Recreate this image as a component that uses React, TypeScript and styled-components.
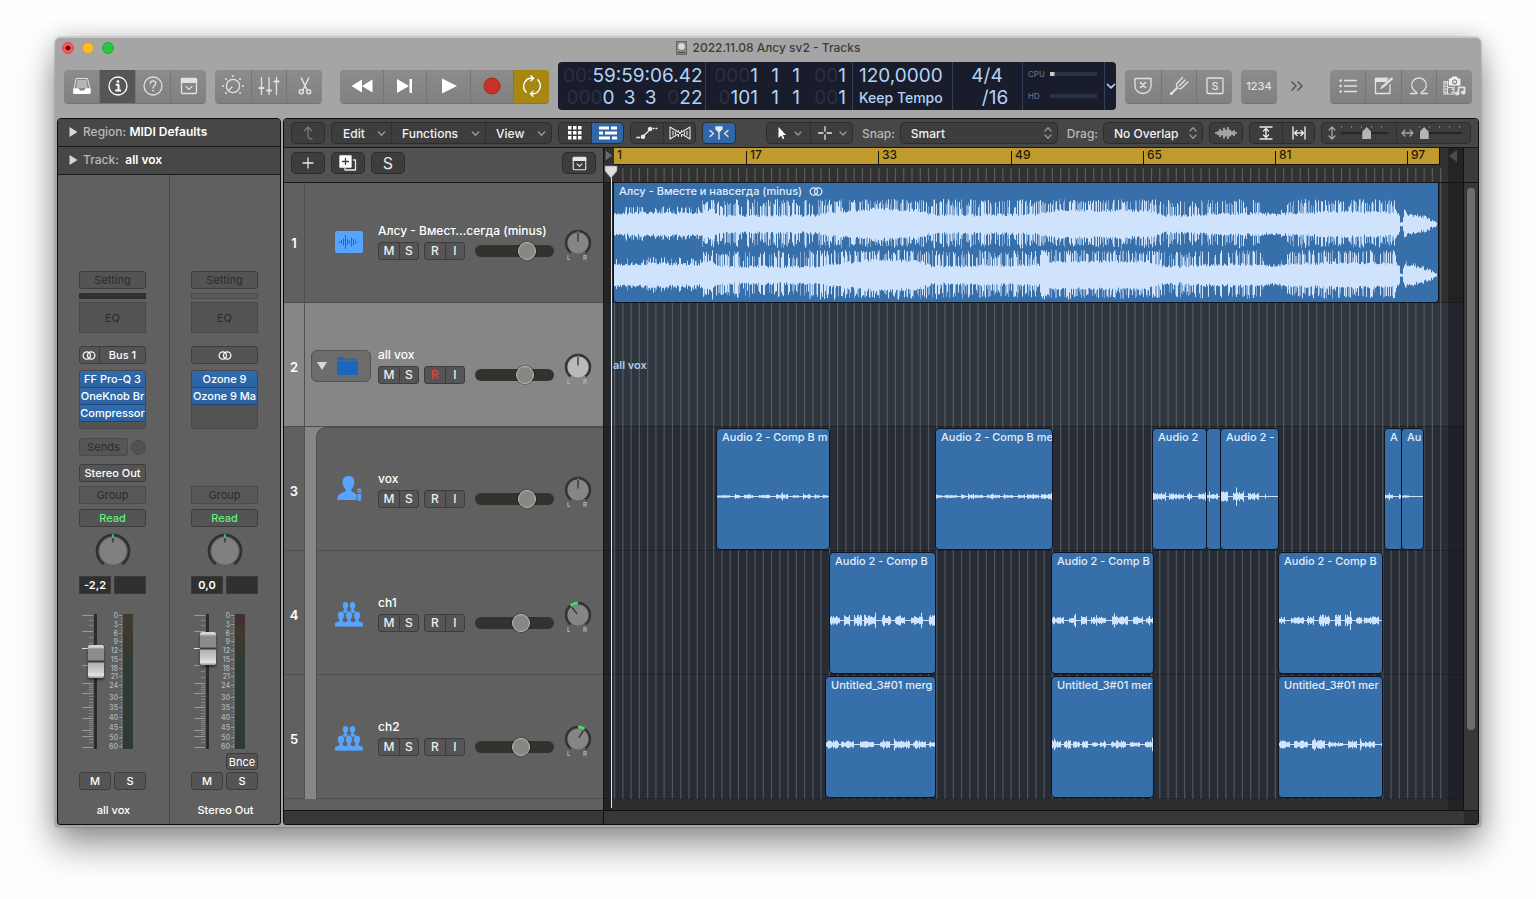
import React from 'react';
import styled, { createGlobalStyle, css } from 'styled-components';

const Global = createGlobalStyle`
  *, *::before, *::after { box-sizing: border-box; }
  body { margin: 0; background: #fefefe; font-family: Inter, "Liberation Sans", sans-serif; }
  button, input, select { font: inherit; color: inherit; margin: 0; padding: 0; border: 0; background: none; border-radius: 0; }
  svg { display: block; flex: none; }
`;

const BLUE = '#376fab';
const WAVE = '#cfe4fc';
const WAVE_MID = '#86abd6';

/* ---------- window ---------- */

const Page = styled.main`
  padding: 37px 55px 73px;
`;

const Window = styled.div`
  background: #a5a5a5;
  border-radius: 6px 6px 3px 3px;
  border-top: 1px solid #c8c8c8;
  box-shadow: 0 0 2px rgba(0, 0, 0, 0.35), 0 18px 36px rgba(0, 0, 0, 0.42), 0 0 22px rgba(0, 0, 0, 0.14);
  padding: 0 2px 2px;
`;

const TitleBar = styled.header`
  height: 22px;
  display: grid;
  grid-template-columns: 1fr auto 1fr;
  align-items: center;
  padding: 0 5px 2px;
`;

const Lights = styled.div`
  display: flex;
  gap: 8px;
`;

const Light = styled.button<{ $color: string; $edge: string; $dirty?: boolean }>`
  width: 12px;
  height: 12px;
  border-radius: 50%;
  background: ${(p) => (p.$dirty ? `radial-gradient(circle, #5a0d08 0 2px, ${p.$color} 3px)` : p.$color)};
  border: 1px solid ${(p) => p.$edge};
`;

const Title = styled.h1`
  margin: 0;
  display: flex;
  align-items: center;
  gap: 6px;
  font-size: 12px;
  font-weight: 500;
  line-height: 16px;
  color: #3c3c3c;
`;

const ControlBar = styled.div`
  height: 52px;
  margin-bottom: 6px;
  padding: 0 7px;
  display: flex;
  align-items: center;
  gap: 9px;
`;

const Group = styled.div<{ $wide?: boolean; $push?: boolean }>`
  display: flex;
  flex: none;
  height: 33px;
  border-radius: 4px;
  overflow: hidden;
  background: linear-gradient(#8c8c8c, #808080);
  box-shadow: 0 1px 0 #747474;
  margin-left: ${(p) => (p.$push ? 'auto' : p.$wide ? '9px' : '0')};
`;

const Seg = styled.button<{ $w?: number; $tone?: 'dark' | 'gold' }>`
  width: ${(p) => p.$w ?? 36}px;
  display: flex;
  align-items: center;
  justify-content: center;
  color: #e2e2e2;
  font-size: 11px;
  font-weight: 500;
  & + & { border-left: 1px solid #757575; }
  ${(p) => p.$tone === 'dark' && css`background: #565656; color: #fff;`}
  ${(p) => p.$tone === 'gold' && css`background: #a68711; color: #fff;`}
`;

const More = styled.button`
  margin-left: 4px;
  color: #555;
`;

/* ---------- LCD ---------- */

const Lcd = styled.section`
  flex: none;
  width: 558px;
  height: 48px;
  border-radius: 4px;
  background: #191c2b;
  color: #b3d3f7;
  display: grid;
  grid-template-columns: 147px 147px 100px 70px 82px 12px;
  overflow: hidden;
`;

const LcdCell = styled.div<{ $center?: boolean }>`
  display: grid;
  grid-template-rows: 22px 22px;
  align-content: center;
  align-items: center;
  justify-items: ${(p) => (p.$center ? 'center' : 'stretch')};
  font-size: 19px;
  line-height: 22px;
  padding: 1px 6px 0 5px;
  & + & { border-left: 1px solid #33415a; }
`;

const Digits = styled.div`
  display: grid;
  grid-template-columns: 1fr 21px 21px 46px;
  text-align: right;
  white-space: nowrap;
`;

const Clock = styled.div`
  text-align: right;
  white-space: nowrap;
`;

const Ghost = styled.span`
  color: #2b3040;
`;

const Tempo = styled.div`
  padding-left: 1px;
  white-space: nowrap;
`;

const TempoMode = styled.div`
  padding-left: 1px;
  font-size: 14px;
  font-weight: 500;
  white-space: nowrap;
`;

const Division = styled.div`
  padding-left: 16px;
`;

const Load = styled.div`
  display: grid;
  grid-template-columns: 22px 1fr;
  align-items: center;
  padding-bottom: 3px;
  font-size: 8px;
  line-height: 16px;
  font-weight: 500;
  color: #5f7189;
`;

const LoadBar = styled.span<{ $lit?: boolean }>`
  height: 4px;
  margin-right: 1px;
  background: ${(p) => (p.$lit ? 'linear-gradient(90deg, #c8c8b8 4px, #273148 5px)' : '#273148')};
`;

const LcdMenu = styled.button`
  display: flex;
  align-items: center;
  justify-content: center;
  border-left: 1px solid #33415a;
`;

/* ---------- panels ---------- */

const Panels = styled.div`
  display: flex;
  align-items: stretch;
  gap: 2px;
`;

const Panel = styled.section<{ $fill?: boolean }>`
  border: 1px solid #0c0c0c;
  border-radius: 4px 4px 3px 3px;
  overflow: hidden;
  background: #606060;
  ${(p) => (p.$fill ? css`flex: 1; min-width: 0;` : css`flex: none; width: 224px; display: flex; flex-direction: column;`)}
`;

const Disclosure = styled.button`
  height: 28px;
  display: flex;
  align-items: center;
  gap: 5px;
  padding: 0 10px 2px;
  background: #474747;
  border-bottom: 1px solid #191919;
  font-size: 12px;
  font-weight: 500;
  color: #b9b9b9;
  & strong { color: #fff; font-weight: 600; }
`;

const Strips = styled.div`
  flex: 1;
  display: grid;
  grid-template-columns: 1fr 1fr;
`;

const Strip = styled.div`
  padding: 96px 23px 5px 21px;
  display: flex;
  flex-direction: column;
  font-size: 11px;
  font-weight: 500;
  color: #fff;
  & + & { border-left: 1px solid #474747; padding-left: 21px; padding-right: 22px; }
`;

const Slot = styled.button<{ $mb: number; $look?: 'dim' | 'flat' | 'read' }>`
  flex: none;
  height: 18px;
  width: 100%;
  display: flex;
  align-items: center;
  justify-content: center;
  margin-bottom: ${(p) => p.$mb}px;
  border: 1px solid #3d3d3d;
  border-radius: 3px;
  background: #545454;
  white-space: nowrap;
  overflow: hidden;
  ${(p) => p.$look === 'dim' && css`color: #2c2c2c; font-weight: 400;`}
  ${(p) => p.$look === 'flat' && css`color: #2c2c2c; font-weight: 400; border-color: #4a4a4a; border-radius: 0; background: #585858;`}
  ${(p) => p.$look === 'read' && css`color: #5cf27c;`}
`;

const GainMeter = styled.div<{ $on?: boolean }>`
  height: 6px;
  margin-bottom: 3px;
  background: ${(p) => (p.$on ? '#323232' : '#585858')};
  border: 1px solid ${(p) => (p.$on ? '#2e2e2e' : '#4c4c4c')};
`;

const Eq = styled.button`
  height: 31px;
  margin-bottom: 13px;
  background: #545454;
  border: 1px solid #484848;
  color: #2c2c2c;
  font-weight: 400;
`;

const BusSplit = styled.span`
  align-self: stretch;
  display: flex;
  align-items: center;
  padding: 0 3px 0 2px;
  border-right: 1px solid #3d3d3d;
`;

const BusName = styled.span`
  flex: 1;
  text-align: center;
`;

const Inserts = styled.div`
  height: 59px;
  margin-bottom: 9px;
  background: #535353;
  border: 1px solid #484848;
  border-radius: 3px;
`;

const Insert = styled.button`
  display: block;
  width: 100%;
  height: 17px;
  background: linear-gradient(#2f6cb0, #2c62a0);
  border-bottom: 1px solid #1d4577;
  border-radius: 3px;
  white-space: nowrap;
  overflow: hidden;
  font-size: 11px;
  line-height: 16px;
`;

const SendRow = styled.div`
  display: grid;
  grid-template-columns: 49px 15px;
  gap: 3px;
  align-items: center;
  height: 18px;
  margin-bottom: 8px;
`;

const SendSlot = styled.button`
  height: 18px;
  border: 1px solid #4a4a4a;
  border-radius: 3px;
  background: #565656;
  color: #2c2c2c;
  font-weight: 400;
`;

const SendKnob = styled.span`
  width: 15px;
  height: 15px;
  border-radius: 50%;
  background: #525252;
  border: 1px solid #484848;
`;

const Blank = styled.div`
  height: 48px;
  flex: none;
`;

const KnobBox = styled.label<{ $mb?: number }>`
  position: relative;
  flex: none;
  align-self: center;
  margin-bottom: ${(p) => p.$mb ?? 0}px;
`;

const KnobInput = styled.input`
  position: absolute;
  inset: 0;
  width: 100%;
  height: 100%;
  opacity: 0;
`;

const Pair = styled.div<{ $mb: number }>`
  display: grid;
  grid-template-columns: 1fr 1fr;
  gap: 3px;
  margin-bottom: ${(p) => p.$mb}px;
`;

const Value = styled.input`
  width: 100%;
  height: 18px;
  background: #303030;
  border: 1px solid #3a3a3a;
  text-align: center;
  font-weight: 600;
`;

const FaderBox = styled.div`
  position: relative;
  height: 135px;
  margin-bottom: 4px;
  & > svg { overflow: visible; }
`;

const Fader = styled.input`
  position: absolute;
  left: 8px;
  top: 0;
  width: 17px;
  height: 135px;
  appearance: none;
  writing-mode: vertical-lr;
  direction: rtl;
  &::-webkit-slider-thumb {
    appearance: none;
    width: 16px;
    height: 33px;
    border-radius: 2px;
    background: linear-gradient(#d5d5d5 0 2px, #8c8c8c 4px 15px, #3c3c3c 16px 17px, #aab0b4 18px, #d0d4d6 28px, #e6e6e6 30px, #9a9a9a 33px);
    box-shadow: 0 2px 3px rgba(0, 0, 0, 0.5);
  }
`;

const BounceRow = styled.div`
  display: flex;
  justify-content: flex-end;
  height: 17px;
  margin-bottom: 2px;
`;

const Bounce = styled.button`
  width: 32px;
  border: 1px solid #3d3d3d;
  border-radius: 3px;
  background: #545454;
  font-weight: 400;
  display: flex;
  align-items: center;
  justify-content: center;
`;

const StripName = styled.div`
  margin: 12px 0 0 2px;
  line-height: 16px;
  text-align: center;
  white-space: nowrap;
`;

/* ---------- tracks toolbar ---------- */

const TrackBar = styled.div`
  height: 29px;
  background: #474747;
  border-bottom: 1px solid #161616;
  padding: 0 8px;
  display: flex;
  align-items: center;
  gap: 8px;
  color: #f2f2f2;
  font-size: 12px;
  font-weight: 500;
`;

const Box = styled.div<{ $push?: boolean }>`
  flex: none;
  display: flex;
  height: 20px;
  border-radius: 4px;
  background: #3d3d3d;
  box-shadow: 0 0 0 1px #2d2d2d;
  overflow: hidden;
  margin-left: ${(p) => (p.$push ? 'auto' : '0')};
`;

const BoxButton = styled.button<{ $w: number; $on?: boolean; $off?: boolean }>`
  width: ${(p) => p.$w}px;
  display: flex;
  align-items: center;
  justify-content: center;
  background: ${(p) => (p.$on ? '#2f67a9' : 'none')};
  color: ${(p) => (p.$off ? '#7c7c7c' : '#e8e8e8')};
  & + & { border-left: 1px solid #303030; }
`;

const MenuButton = styled.button<{ $w: number }>`
  width: ${(p) => p.$w}px;
  display: flex;
  align-items: center;
  justify-content: space-between;
  padding: 0 5px 0 11px;
  & + & { border-left: 1px solid #303030; padding-left: 10px; }
  & svg { color: #9a9a9a; }
`;

const Field = styled.label`
  flex: none;
  display: flex;
  align-items: center;
  gap: 6px;
  color: #b9b9b9;
  margin-left: 2px;
`;

const SelectBox = styled.span<{ $w: number }>`
  position: relative;
  width: ${(p) => p.$w}px;
  height: 20px;
  border-radius: 4px;
  background: #3d3d3d;
  box-shadow: 0 0 0 1px #2d2d2d;
  & svg { position: absolute; right: 4px; top: 3px; pointer-events: none; }
`;

const Select = styled.select`
  appearance: none;
  width: 100%;
  height: 20px;
  padding-left: 10px;
  color: #f2f2f2;
`;

const ZoomPart = styled.label<{ $w: number }>`
  width: ${(p) => p.$w}px;
  display: flex;
  align-items: center;
  gap: 5px;
  padding: 0 8px 0 6px;
  color: #a5a5a5;
  & + & { border-left: 1px solid #303030; padding-left: 4px; }
`;

const ZoomRange = styled.input`
  flex: 1;
  min-width: 0;
  height: 20px;
  appearance: none;
  background:
    linear-gradient(#262626, #262626) center / 100% 2px no-repeat,
    repeating-linear-gradient(90deg, #777 0 1px, transparent 1px 10px) 0 3px / 100% 2px no-repeat;
  &::-webkit-slider-thumb {
    appearance: none;
    width: 9px;
    height: 12px;
    background: #b5b5b5;
    clip-path: polygon(50% 0, 100% 40%, 100% 100%, 0 100%, 0 40%);
  }
`;

/* ---------- arrange area ---------- */

const Arrange = styled.div`
  display: grid;
  grid-template-columns: 320px minmax(0, 1fr) 15px;
`;

const HeaderTop = styled.div`
  height: 35px;
  display: flex;
  align-items: center;
  gap: 8px;
  padding: 0 8px 4px;
  background: #525252;
  border-bottom: 1px solid #1a1a1a;
  border-right: 1px solid #111;
  font-size: 16px;
  color: #f2f2f2;
`;

const Headers = styled.div`
  height: 627px;
  background: #606060;
  border-right: 1px solid #161616;
`;

const Row = styled.div<{ $clipped?: boolean; $selected?: boolean }>`
  height: ${(p) => (p.$clipped ? 120 : 124)}px;
  overflow: hidden;
  display: flex;
  align-items: flex-end;
  color: #fff;
  background: ${(p) => (p.$selected ? '#868686' : '#606060')};
`;

const RowNumber = styled.div`
  width: 21px;
  height: 124px;
  padding-top: 4px;
  display: flex;
  align-items: center;
  justify-content: center;
  font-size: 13px;
  font-weight: 600;
  border-right: 1px solid #505050;
  border-bottom: 1px solid #4e4e4e;
`;

const Nest = styled.div`
  width: 11px;
  height: 124px;
  background: #868686;
`;

const RowBody = styled.div<{ $nested?: boolean; $first?: boolean; $selected?: boolean }>`
  flex: 1;
  height: 124px;
  padding-top: 2px;
  display: flex;
  align-items: center;
  background: ${(p) => (p.$selected ? '#868686' : '#606060')};
  border-bottom: 1px solid #4e4e4e;
  ${(p) => p.$nested && css`border-left: 1px solid #505050;`}
  ${(p) => p.$first && css`padding-top: 0; border-top: 1px solid #505050; border-top-left-radius: 10px;`}
`;

const NestShell = styled.div`
  flex: 1;
  display: flex;
  background: #868686;
`;

const IconCell = styled.div<{ $nested?: boolean }>`
  width: ${(p) => (p.$nested ? 54 : 66)}px;
  display: flex;
  justify-content: flex-end;
`;

const IconSlot = styled.div`
  width: 44px;
  display: flex;
  justify-content: center;
`;

const FolderButton = styled.button`
  width: 60px;
  height: 32px;
  border: 1px solid #555;
  border-radius: 6px;
  background: #6c6c6c;
  display: flex;
  align-items: center;
  gap: 10px;
  padding-left: 5px;
`;

const Info = styled.div`
  width: 176px;
  margin: 0 10px 0 7px;
`;

const TrackName = styled.div`
  height: 19px;
  font-size: 12px;
  line-height: 16px;
  font-weight: 500;
  white-space: nowrap;
`;

const Controls = styled.div`
  display: flex;
  align-items: center;
`;

const Duo = styled.div`
  display: flex;
  height: 18px;
  border: 1px solid #3c3c3c;
  border-radius: 3px;
  margin-right: 5px;
  background: #555;
`;

const DuoButton = styled.button<{ $red?: boolean }>`
  width: 20px;
  font-size: 12px;
  font-weight: 500;
  line-height: 16px;
  color: ${(p) => (p.$red ? '#e2433c' : '#eee')};
  & + & { width: 19px; border-left: 1px solid #3c3c3c; }
`;

const Volume = styled.input`
  appearance: none;
  width: 79px;
  height: 12px;
  margin-left: 5px;
  border-radius: 6px;
  background: #32332f;
  &::-webkit-slider-thumb {
    appearance: none;
    width: 18px;
    height: 18px;
    border-radius: 50%;
    background: #868884;
    border: 1px solid #bdbdbd;
    box-shadow: 0 0 0 1px rgba(0, 0, 0, 0.25);
  }
`;

const Timeline = styled.div`
  position: relative;
  overflow: hidden;
  background: #2e2e2e;
`;

const Ruler = styled.div`
  height: 35px;
  position: relative;
  background: #323232;
  border-bottom: 1px solid #141414;
`;

const Cycle = styled.div`
  height: 17px;
  width: 826px;
  margin-left: 10px;
  background: #c09a2d;
  border-bottom: 1px solid #111;
  border-right: 1px solid #111;
`;

const Overlay = styled.svg`
  position: absolute;
  left: 0;
  top: 0;
`;

const BarLabel = styled.span<{ $x: number }>`
  position: absolute;
  left: ${(p) => p.$x}px;
  top: 0;
  font-size: 12px;
  line-height: 14px;
  font-weight: 500;
  color: #1d1a0c;
`;

const Lane = styled.div<{ $clipped?: boolean; $bg: string }>`
  height: ${(p) => (p.$clipped ? 120 : 124)}px;
  background: ${(p) => p.$bg};
  border-bottom: 1px solid #1d2126;
`;

const LaneStack = styled.div`
  position: relative;
`;

const ClipLayer = styled.div`
  position: absolute;
  left: 0;
  right: 0;
  top: 35px;
`;

const ClipRow = styled.div<{ $clipped?: boolean }>`
  position: relative;
  height: ${(p) => (p.$clipped ? 120 : 124)}px;
`;

const Region = styled.div<{ $x: number; $w: number; $tall?: boolean }>`
  position: absolute;
  left: ${(p) => p.$x}px;
  width: ${(p) => p.$w}px;
  top: ${(p) => (p.$tall ? 0 : 1)}px;
  height: ${(p) => (p.$tall ? 120 : 122)}px;
  background: ${BLUE};
  border: 1px solid #0d1420;
  border-radius: ${(p) => (p.$tall ? '0 0 4px 4px' : '4px')};
  border-top-width: ${(p) => (p.$tall ? 0 : 1)}px;
  overflow: hidden;
`;

const RegionName = styled.div`
  position: relative;
  display: flex;
  align-items: center;
  gap: 7px;
  padding-left: 5px;
  font-size: 11px;
  line-height: 16px;
  font-weight: 500;
  color: #e0edfc;
  white-space: nowrap;
`;

const FolderLabel = styled.span`
  position: absolute;
  left: 9px;
  top: 54px;
  font-size: 11px;
  line-height: 16px;
  font-weight: 600;
  color: #a9cdf5;
`;

const EndShade = styled.div`
  position: absolute;
  left: 844px;
  right: 0;
  top: 0;
  bottom: 0;
  background: rgba(20, 20, 20, 0.45);
`;

const StartShade = styled.div`
  position: absolute;
  left: 0;
  width: 7px;
  top: 35px;
  bottom: 0;
  background: rgba(20, 20, 20, 0.4);
`;

const ScrollTop = styled.div`
  height: 35px;
  background: #3a3a3a;
  border-left: 1px solid #111;
  border-bottom: 1px solid #111;
`;

const ScrollTrack = styled.div`
  height: 627px;
  padding: 5px 3px;
  background: #383838;
  border-left: 1px solid #111;
`;

const ScrollThumb = styled.div`
  height: 542px;
  border-radius: 4px;
  background: #6e6e6e;
`;

const FootBar = styled.div`
  height: 14px;
  background: #373737;
  border-top: 1px solid #111;
  display: grid;
  grid-template-columns: 320px 1fr 14px;
  & > span:first-child { border-right: 1px solid #111; }
  & > span:last-child { background: #2c2c2c; }
`;

/* ---------- icons ---------- */

type IconProps = { w?: number; h?: number; box?: string; sw?: number; children: React.ReactNode };
const Icon = ({ w = 20, h = 20, box, sw = 1.3, children }: IconProps) => (
  <svg width={w} height={h} viewBox={box ?? `0 0 ${w} ${h}`} fill="none" stroke="currentColor" strokeWidth={sw} strokeLinecap="round" strokeLinejoin="round" aria-hidden="true">
    {children}
  </svg>
);

const TrayIcon = () => (
  <Icon sw={1}>
    <path d="M4.5 2.5h11l2.6 11v3.6h-16v-3.6z" />
    <path d="M6 5h8M5.6 7h8.8M5.2 9h9.6M5 11h10" strokeWidth="1.2" />
    <path d="M2.1 12.8h4.4c.5 0 .6 2.2 1.4 2.2h4.2c.8 0 .9-2.2 1.4-2.2h4.6v4.7H2.1z" fill="#fff" stroke="#fff" />
  </Icon>
);
const InfoIcon = () => (
  <Icon>
    <circle cx="10" cy="10" r="9" />
    <circle cx="10" cy="5.6" r="1.4" fill="currentColor" stroke="none" />
    <path d="M7.8 8.8h2.7v5.4M7.2 14.4h5.8" strokeWidth="2" strokeLinecap="butt" />
  </Icon>
);
const HelpIcon = () => (
  <Icon>
    <circle cx="10" cy="10" r="9" />
    <path d="M7.3 7.6c0-3.6 5.5-3.4 5.5-.2 0 2-2.7 2.3-2.7 4.6" />
    <circle cx="10" cy="14.6" r=".9" fill="currentColor" stroke="none" />
  </Icon>
);
const DropWindowIcon = ({ s = 18 }: { s?: number }) => (
  <Icon w={s} h={s} box="0 0 18 18">
    <rect x="1.5" y="1.5" width="15" height="15" rx="1" />
    <path d="M1.5 2h15v3.4h-15z" fill="currentColor" />
    <path d="M6 9.4l3 3 3-3" />
  </Icon>
);
const DialIcon = () => (
  <Icon w={22} h={22}>
    <circle cx="11" cy="11" r="6.6" />
    <path d="M10 12l-3.4 3.4" />
    {[0, 45, 135, 180, 225, 270, 315].map((a) => (
      <circle key={a} cx={11 + 10 * Math.cos((a * Math.PI) / 180)} cy={11 + 10 * Math.sin((a * Math.PI) / 180)} r="1" fill="currentColor" stroke="none" />
    ))}
  </Icon>
);
const MixerIcon = () => (
  <Icon w={22}>
    <path d="M3.5 1.5v17M11 1.5v17M18.5 1.5v17" />
    <path d="M1.5 12h4M9 14.5h4M16.5 5.5h4" strokeWidth="2.2" />
  </Icon>
);
const ScissorsIcon = () => (
  <Icon w={16} sw={1.5}>
    <path d="M4.3 2l5.8 12M11.7 2L5.9 14" />
    <circle cx="4.3" cy="15.7" r="2" />
    <circle cx="11.7" cy="15.7" r="2" />
  </Icon>
);
const RewindIcon = () => (
  <Icon w={22} h={16} sw={0}><path d="M11 1.500v13L0.500 8zM21.500 1.500v13L11 8z" fill="#fff" /></Icon>
);
const ForwardIcon = () => (
  <Icon w={18} h={16} sw={0}><path d="M1 1l12 7-12 7zM13.500 1H16v14h-2.500z" fill="#fff" /></Icon>
);
const PlayIcon = () => (
  <Icon w={18} h={18} sw={0}><path d="M2 1.500L17 9 2 16.500z" fill="#fff" /></Icon>
);
const RecordIcon = () => (
  <Icon w={18} h={18} sw={1}><circle cx="9" cy="9" r="8" fill="#cb3028" stroke="#a52a24" /></Icon>
);
const CycleIcon = () => (
  <Icon w={22} h={22} sw={1.4}>
    <path d="M5.200 17.200A8.300 8.300 0 0 1 9 3.200l3.200 0M16.800 4.800A8.300 8.300 0 0 1 13 18.800l-3.200 0" />
    <path d="M10 .8l2.600 2.400L10 5.700M12 16.300l-2.600 2.500 2.600 2.400" />
  </Icon>
);
const ShieldIcon = () => (
  <Icon w={18} h={18}>
    <path d="M1 1.500h16v7.200c0 4.600-3.700 7.800-8 7.800s-8-3.200-8-7.800z" />
    <path d="M6.500 5.500l5 5M11.500 5.500l-5 5" strokeWidth="1.600" />
  </Icon>
);
const ForkIcon = () => (
  <Icon>
    <path d="M2.500 17.500l5-5" strokeWidth="2" />
    <circle cx="2.400" cy="17.500" r="1.500" fill="currentColor" stroke="none" />
    <path d="M13.500 1.500L8 7.500c-2 2.500 2 7 4.700 4.500l6-6M16 4l-5.500 5.800" />
  </Icon>
);
const SoloIcon = () => (
  <Icon w={18} h={18}>
    <rect x="1" y="1" width="16" height="15.500" rx="1" />
    <text x="9" y="13" textAnchor="middle" fontSize="11" fontWeight="500" fill="currentColor" stroke="none">S</text>
  </Icon>
);
const ListIcon = () => (
  <Icon w={18} h={16}>
    <path d="M5.500 2.500h12M5.500 8h12M5.500 13.500h12" />
    <path d="M1.500 2.500h.2M1.500 8h.2M1.500 13.500h.2" strokeWidth="2.400" />
  </Icon>
);
const NoteIcon = () => (
  <Icon>
    <path d="M16 9v8.500H1.500v-15H14" />
    <path d="M1.500 2.500h11v2.800h-11z" fill="currentColor" />
    <path d="M9 10.600l8.700-8" strokeWidth="2.300" />
    <path d="M7 12.500l1.200-2.200" />
  </Icon>
);
const LoopIcon = () => (
  <Icon>
    <path d="M1.500 17.500h6.200c.6-.5-.2-1.300-.8-1.700a7.300 7.300 0 1 1 6.200 0c-.6.400-1.400 1.200-.8 1.700h6.200" />
  </Icon>
);
const MediaIcon = () => (
  <Icon w={24} h={20} sw={1.2}>
    <path d="M1 5.500h3.500v12.500H1zM4.500 11.500h5M4.500 18h6.500V10" />
    <path d="M2.800 6.500v11M9.300 12.500v5" strokeWidth="1.600" strokeDasharray="1.500 1.500" strokeLinecap="butt" />
    <path d="M6.500 3h2l1-1.800h4l1 1.800h2.300v6H6.500z" fill="#f2f2f2" stroke="#f2f2f2" />
    <circle cx="11.600" cy="5.800" r="2" stroke="#858585" />
    <path d="M15.500 17.300v-6h6v5" strokeWidth="1.800" />
    <ellipse cx="14.200" cy="17.500" rx="1.700" ry="1.300" fill="currentColor" />
    <ellipse cx="20.200" cy="16.500" rx="1.700" ry="1.300" fill="currentColor" />
  </Icon>
);
const Chevron = ({ s = 9 }: { s?: number }) => (
  <Icon w={s} h={s} box="0 0 9 9" sw={1.4}><path d="M1.300 3l3.200 3.200L7.700 3" /></Icon>
);
const UpDown = () => (
  <Icon w={10} h={14} sw={1.2}><path d="M2 5l3-3.300L8 5M2 9l3 3.300L8 9" stroke="#9c9c9c" /></Icon>
);
const Stereo = () => (
  <Icon w={14} h={9} sw={1.2}><circle cx="4.800" cy="4.500" r="3.700" /><circle cx="9.200" cy="4.500" r="3.700" /></Icon>
);
const Tri = ({ down }: { down?: boolean }) => (
  <Icon w={10} h={12} sw={0}><path d={down ? 'M0 2h10L5 10z' : 'M1.500 1l8 5-8 5z'} fill="#d8d8d8" /></Icon>
);
const WaveGlyph = () => (
  <Icon w={22} h={16} sw={1.2}>
    <path d="M1 7.500v1M3 6.500v3M5 4.500v7M7 6v4M9 3v10M11 5v6M13 2.500v11M15 5v6M17 6.500v3M19 5.500v5M21 7.500v1" />
  </Icon>
);
const PersonIcon = () => (
  <svg width="28" height="28" viewBox="0 0 28 28" fill="#57a4ff" aria-hidden="true">
    <path d="M13.500 1c4 0 6 2.600 5.800 6.500-.1 3-1.400 5.500-2.800 6.800v2.200c2.500 1 5.500 2 5.800 5.500v3H2.200c0-5.500 4-7.500 8.300-8.500v-2.200C9 13 7.700 10.500 7.600 7.500 7.400 3.600 9.500 1 13.500 1z" />
    <g stroke="#606060" strokeWidth=".8"><rect x="21.500" y="13" width="5.500" height="5" rx="2.500" /><path d="M21.800 18.300h5l-.5 8h-4z" /></g>
    <path d="M22.500 15.500h3.500" stroke="#606060" strokeWidth=".8" />
  </svg>
);
const GroupPeopleIcon = () => (
  <svg width="30" height="26" viewBox="0 0 30 26" fill="#57a4ff" aria-hidden="true">
    {[11.5, 18.5].map((x) => (
      <g key={x}><ellipse cx={x} cy="4.500" rx="2.700" ry="3.400" /><path d={`M${x - 1.2} 6h2.400v3l3.300 1.400v1.600h-9v-1.600l3.300-1.400z`} /></g>
    ))}
    {[7, 15, 23].map((x) => (
      <ellipse key={x} cx={x} cy="14.500" rx="3.500" ry="4.200" stroke="#606060" strokeWidth=".8" />
    ))}
    {[7, 15, 23].map((x) => (
      <path key={x} d={`M${x - 1.6} 17h3.200v3.200l4.400 1.900v3.400h-12v-3.400l4.400-1.900z`} />
    ))}
  </svg>
);
const FolderIcon = () => (
  <svg width="22" height="20" viewBox="0 0 22 20" fill="#1b65bd" aria-hidden="true">
    <path d="M0 4V2c0-.6.400-1 1-1h6l1.500 1.800H20c.6 0 1 .4 1 1V4.500H0z" opacity=".85" />
    <path d="M0 5.300h21V18c0 .6-.4 1-1 1H1c-.6 0-1-.4-1-1z" />
  </svg>
);
const AudioTrackIcon = () => (
  <svg width="28" height="22" viewBox="0 0 28 22" aria-hidden="true">
    <rect width="28" height="22" rx="2.500" fill="#57a4ff" />
    <path d="M4.500 10v2M6.500 9v4M8.500 7.500v7M10.500 4v14M12.500 8v6M14.500 9.500v3M16.500 6.500v9M18.500 8v6M20.500 9.500v3M22.500 10.500v1" stroke="#2f66a8" />
  </svg>
);

/* ---------- knobs ---------- */

const polar = (cx: number, cy: number, r: number, deg: number) => {
  const a = ((deg - 90) * Math.PI) / 180;
  return `${(cx + r * Math.cos(a)).toFixed(2)} ${(cy + r * Math.sin(a)).toFixed(2)}`;
};

const arc = (cx: number, cy: number, r: number, from: number, to: number) =>
  `M${polar(cx, cy, r, from)}A${r} ${r} 0 ${to - from > 180 ? 1 : 0} 1 ${polar(cx, cy, r, to)}`;

const Pan = ({ name, angle = 0, bright }: { name: string; angle?: number; bright?: boolean }) => (
  <KnobBox>
    <svg width="28" height="38" viewBox="0 0 28 38" aria-hidden="true">
      <circle cx="14" cy="20" r="10.500" fill={bright ? '#b9b9b9' : '#858585'} />
      <path d={arc(14, 20, 12, -142, 142)} fill="none" stroke="#333" strokeWidth="2.400" />
      {angle !== 0 && <path d={arc(14, 20, 12, Math.min(0, angle), Math.max(0, angle))} fill="none" stroke="#4fd963" strokeWidth="2.800" />}
      <path d={`M${polar(14, 20, 1.5, angle)}L${polar(14, 20, 10, angle)}`} stroke="#2b2b2b" strokeWidth="1.200" />
      {angle === 0 && <path d="M14 8v2" stroke="#3f9f4c" strokeWidth="1.200" />}
      <g fill="#b8b8b8" fontSize="6" fontWeight="600"><text x="3" y="37">L</text><text x="19" y="37">R</text></g>
    </svg>
    <KnobInput type="range" min={-64} max={63} defaultValue={angle} aria-label={`${name} pan`} />
  </KnobBox>
);

const StripKnob = ({ name }: { name: string }) => (
  <KnobBox $mb={7}>
    <svg width="36" height="36" viewBox="0 0 36 36" aria-hidden="true">
      <circle cx="18" cy="18" r="13.500" fill="#808080" />
      <path d={arc(18, 18, 16, -145, 145)} fill="none" stroke="#303030" strokeWidth="2.600" />
      <path d="M18 5v4.500" stroke="#222" strokeWidth="1.200" />
      <path d="M18 1v4" stroke="#4fd963" strokeWidth="1.400" />
    </svg>
    <KnobInput type="range" min={-64} max={63} defaultValue={0} aria-label={`${name} pan`} />
  </KnobBox>
);

/* ---------- fader scale ---------- */

const METER: [string, number][] = [
  ['0', 2], ['3', 11], ['6', 20], ['9', 28], ['12', 37], ['15', 46], ['18', 55], ['21', 63],
  ['24', 72], ['30', 84], ['35', 94], ['40', 104], ['45', 114], ['50', 124], ['60', 133],
];
const MAJOR = [2, 18, 35, 52, 70, 80, 94, 105, 117, 123, 134];
const MINOR = [7, 12, 24, 30, 41, 47, 58, 64, 72, 74, 76, 78, 83, 86, 89, 92, 97, 100, 103, 107, 109, 111, 113, 115, 119, 121, 126, 129];

const FaderScale = ({ hot }: { hot?: boolean }) => (
  <svg width="67" height="136" viewBox="0 0 67 136" aria-hidden="true">
    <defs>
      <linearGradient id={hot ? 'meterHot' : 'meter'} x1="0" y1="0" x2="0" y2="1">
        <stop offset="0" stopColor={hot ? '#432f2f' : '#413a2e'} />
        <stop offset=".08" stopColor={hot ? '#432f2f' : '#413a2e'} />
        <stop offset=".09" stopColor="#403a2e" />
        <stop offset=".3" stopColor="#35392e" />
        <stop offset=".35" stopColor="#2f3a32" />
        <stop offset="1" stopColor="#2f3a32" />
      </linearGradient>
    </defs>
    <path d={MAJOR.map((y) => `M3 ${y - 0.5}h11`).join('')} stroke="#9a9a9a" />
    <path d={MINOR.map((y) => `M10 ${y - 0.5}h4`).join('')} stroke="#878787" />
    <path d="M3 34.500h11" stroke="#e0e0e0" />
    <rect x="15" y="0" width="3" height="135" rx="1" fill="#2c2c2c" />
    <path d="M42.500 1v134" stroke="#9a9a9a" strokeDasharray="1 2" />
    {METER.map(([t, y]) => (
      <g key={t}>
        <text x="39" y={y + 2} textAnchor="end" fontSize="7" fill="#b5b5b5">{t}</text>
        <path d={`M40 ${y - 0.5}h3`} stroke="#9a9a9a" />
      </g>
    ))}
    <rect x="44" y="0" width="10" height="135" fill={`url(#${hot ? 'meterHot' : 'meter'})`} />
  </svg>
);

/* ---------- waveforms ---------- */

const rng = (seed: number) => () => {
  seed = (seed + 0x6d2b79f5) | 0;
  let t = Math.imul(seed ^ (seed >>> 15), 1 | seed);
  t = (t + Math.imul(t ^ (t >>> 7), 61 | t)) ^ t;
  return ((t ^ (t >>> 14)) >>> 0) / 4294967296;
};

/* x, body height, peak height, share of columns that peak */
const SONG: [number, number, number, number][] = [
  [0, 9, 17, 0.25], [40, 10, 18, 0.25], [86, 9, 17, 0.25], [88, 11, 25, 0.6], [98, 14, 25, 0.6],
  [103, 7, 25, 0.6], [200, 7, 25, 0.6], [222, 10, 25, 0.6], [262, 14, 25, 0.6], [305, 12, 25, 0.6],
  [318, 7, 25, 0.6], [420, 8, 25, 0.6], [440, 12, 25, 0.6], [535, 12, 25, 0.6], [548, 7, 25, 0.5],
  [570, 7, 23, 0.5], [600, 9, 25, 0.5], [647, 9, 25, 0.4], [650, 8, 12, 0.3], [665, 8, 11, 0.3],
  [672, 9, 25, 0.6], [720, 11, 25, 0.6], [780, 10, 25, 0.7], [782, 10, 15, 0.3], [785, 7, 9, 0.3], [786, 1, 1, 0],
  [788, 1, 1, 0], [790, 9, 15, 0.3], [800, 7, 12, 0.3], [812, 4, 8, 0.3], [822, 1, 1, 0], [826, 0, 0, 0],
];

const songPaths = (cy: number, seed: number) => {
  const r = rng(seed);
  let bright = '';
  let mid = '';
  for (let x = 0; x < 823; x++) {
    const k = SONG.findIndex((p) => p[0] > x);
    const a = SONG[k - 1];
    const b = SONG[k];
    const t = (x - a[0]) / (b[0] - a[0]);
    const body = a[1] + (b[1] - a[1]) * t;
    const peak = a[2] + (b[2] - a[2]) * t;
    const share = a[3];
    const base = body + r() * Math.min(3, body);
    bright += `M${x + 0.5} ${(cy - base).toFixed(1)}V${(cy + base + r()).toFixed(1)}`;
    if (r() < share) {
      const h = base + (peak - base) * (0.3 + 0.7 * Math.sqrt(r()));
      const line = `M${x + 0.5} ${(cy - h).toFixed(1)}V${(cy + h * (0.85 + r() * 0.15)).toFixed(1)}`;
      if (r() < 0.5) bright += line;
      else mid += line;
    }
  }
  return { bright, mid };
};

const SongWave = () => {
  const up = songPaths(41, 11);
  const low = songPaths(92, 47);
  return (
    <Overlay width="824" height="119" aria-hidden="true">
      <path d={up.mid + low.mid} stroke={WAVE_MID} />
      <path d={up.bright + low.bright} stroke={WAVE} />
    </Overlay>
  );
};

const VoiceWave = ({ w, seed, amp, quietFrom = 1 }: { w: number; seed: number; amp: number; quietFrom?: number }) => {
  const r = rng(seed);
  let d = `M0 67.500H${w}`;
  let left = 0;
  let on = false;
  let level = 0;
  for (let x = 0; x < w * quietFrom; x++) {
    if (left <= 0) {
      on = !on;
      left = on ? 4 + r() * 12 : 1 + r() * 5;
      level = amp * (0.4 + r() * 0.4);
    }
    left--;
    if (!on) continue;
    const spike = r() < 0.06 ? 1.8 : 1;
    const h = Math.max(1, level * (0.5 + r() * 0.7) * spike);
    d += `M${x + 0.5} ${(67.5 - h).toFixed(1)}v${(h * 2).toFixed(1)}`;
  }
  return <Overlay width={w} height="120" aria-hidden="true"><path d={d} stroke={WAVE} /></Overlay>;
};

/* ---------- data ---------- */

type Clip = { x: number; w: number; name: string; seed: number; amp: number; quietFrom?: number };
const LANE_BG = '#282d35';
const LANES: Clip[][] = [
  [
    { x: 112, w: 114, name: 'Audio 2 - Comp B m', seed: 3, amp: 3 },
    { x: 331, w: 118, name: 'Audio 2 - Comp B me', seed: 8, amp: 3 },
    { x: 548, w: 55, name: 'Audio 2', seed: 5, amp: 5 },
    { x: 602, w: 16, name: '', seed: 6, amp: 6 },
    { x: 616, w: 59, name: 'Audio 2 -', seed: 9, amp: 6, quietFrom: 0.75 },
    { x: 780, w: 19, name: 'A', seed: 12, amp: 4, quietFrom: 0.85 },
    { x: 797, w: 23, name: 'Au', seed: 14, amp: 2, quietFrom: 0.3 },
  ],
  [
    { x: 225, w: 107, name: 'Audio 2 - Comp B', seed: 21, amp: 7 },
    { x: 447, w: 103, name: 'Audio 2 - Comp B', seed: 22, amp: 7 },
    { x: 674, w: 105, name: 'Audio 2 - Comp B', seed: 23, amp: 7 },
  ],
  [
    { x: 221, w: 111, name: 'Untitled_3#01 merg', seed: 31, amp: 5 },
    { x: 447, w: 103, name: 'Untitled_3#01 mer', seed: 32, amp: 5 },
    { x: 674, w: 105, name: 'Untitled_3#01 mer', seed: 33, amp: 5 },
  ],
];

const BARS = Array.from({ length: 101 }, (_, i) => i);
const barX = (i: number) => 10 + (i * 793) / 96;

const TRACKS = [
  { n: 1, name: 'Алсу - Вмест...сегда (minus)', vol: 70, pan: 0, icon: <AudioTrackIcon /> },
  { n: 2, name: 'all vox', vol: 67, pan: 0, selected: true, icon: null },
  { n: 3, name: 'vox', vol: 70, pan: 0, nested: true, icon: <PersonIcon /> },
  { n: 4, name: 'ch1', vol: 60, pan: -38, nested: true, icon: <GroupPeopleIcon /> },
  { n: 5, name: 'ch2', vol: 60, pan: 33, nested: true, icon: <GroupPeopleIcon /> },
];

const TrackHeader = ({ t }: { t: (typeof TRACKS)[number] }) => {
  const body = (
    <RowBody $nested={t.nested} $first={t.n === 3} $selected={t.selected}>
      <IconCell $nested={t.nested}>
        {t.icon ? (
          <IconSlot>{t.icon}</IconSlot>
        ) : (
          <FolderButton aria-label="Close folder"><Tri down /><FolderIcon /></FolderButton>
        )}
      </IconCell>
      <Info>
        <TrackName>{t.name}</TrackName>
        <Controls>
          <Duo><DuoButton>M</DuoButton><DuoButton>S</DuoButton></Duo>
          <Duo><DuoButton $red={t.selected}>R</DuoButton><DuoButton>I</DuoButton></Duo>
          <Volume type="range" defaultValue={t.vol} aria-label={`${t.name} volume`} />
        </Controls>
      </Info>
      <Pan name={t.name} angle={t.pan} bright={t.selected} />
    </RowBody>
  );
  return (
    <Row $clipped={t.n === 1} $selected={t.selected}>
      <RowNumber>{t.n}</RowNumber>
      {t.nested ? <NestShell><Nest />{body}</NestShell> : body}
    </Row>
  );
};

const ChannelStrip = ({ name, level, fader, inserts, output }: { name: string; level: string; fader: number; inserts: string[]; output?: boolean }) => (
  <Strip>
    <Slot $mb={4} $look="dim">Setting</Slot>
    <GainMeter $on={!output} />
    <Eq>EQ</Eq>
    {output ? (
      <Slot $mb={6} aria-label="Stereo"><Stereo /></Slot>
    ) : (
      <Slot $mb={6}><BusSplit><Stereo /></BusSplit><BusName>Bus 1</BusName></Slot>
    )}
    <Inserts>{inserts.map((i) => <Insert key={i}>{i}</Insert>)}</Inserts>
    {output ? (
      <Blank />
    ) : (
      <>
        <SendRow><SendSlot>Sends</SendSlot><SendKnob /></SendRow>
        <Slot $mb={4}>Stereo Out</Slot>
      </>
    )}
    <Slot $mb={5} $look="flat">Group</Slot>
    <Slot $mb={6} $look="read">Read</Slot>
    <StripKnob name={name} />
    <Pair $mb={20}>
      <Value defaultValue={level} aria-label={`${name} level`} />
      <Value defaultValue="" aria-label={`${name} peak`} />
    </Pair>
    <FaderBox>
      <FaderScale hot={output} />
      <Fader type="range" defaultValue={fader} aria-label={`${name} fader`} />
    </FaderBox>
    <BounceRow>{output && <Bounce>Bnce</Bounce>}</BounceRow>
    <Pair $mb={0}><Slot $mb={0}>M</Slot><Slot $mb={0}>S</Slot></Pair>
    <StripName>{name}</StripName>
  </Strip>
);

const Clips = () => (
  <ClipLayer>
    <ClipRow $clipped>
      <Region $x={9} $w={826} $tall>
        <SongWave />
        <RegionName>Алсу - Вместе и навсегда (minus) <Stereo /></RegionName>
      </Region>
    </ClipRow>
    <ClipRow><FolderLabel>all vox</FolderLabel></ClipRow>
    {LANES.map((clips, i) => (
      <ClipRow key={i}>
        {clips.map((c) => (
          <Region key={c.x} $x={c.x} $w={c.w}>
            <VoiceWave w={c.w} seed={c.seed} amp={c.amp} quietFrom={c.quietFrom} />
            <RegionName>{c.name}</RegionName>
          </Region>
        ))}
      </ClipRow>
    ))}
  </ClipLayer>
);

export default function App() {
  return (
    <Page>
      <Global />
      <Window>
        <TitleBar>
          <Lights>
            <Light $color="#fc5b57" $edge="#e0443e" $dirty aria-label="Close" />
            <Light $color="#fdbc2e" $edge="#dea123" aria-label="Minimize" />
            <Light $color="#28c941" $edge="#1eac2c" aria-label="Zoom" />
          </Lights>
          <Title>
            <svg width="11" height="14" viewBox="0 0 11 14" aria-hidden="true">
              <rect x=".5" y=".5" width="10" height="13" fill="#8a8a8a" stroke="#666" />
              <circle cx="5.500" cy="5.500" r="3.300" fill="#dcdcdc" />
              <path d="M2 11.500h7" stroke="#444" />
            </svg>
            2022.11.08 Алсу sv2 - Tracks
          </Title>
        </TitleBar>

        <ControlBar>
          <Group>
            <Seg $w={35} aria-label="Library"><TrayIcon /></Seg>
            <Seg $tone="dark" aria-label="Inspector"><InfoIcon /></Seg>
            <Seg $w={35} aria-label="Quick help"><HelpIcon /></Seg>
            <Seg aria-label="Toolbar"><DropWindowIcon /></Seg>
          </Group>
          <Group>
            <Seg aria-label="Smart controls"><DialIcon /></Seg>
            <Seg $w={35} aria-label="Mixer"><MixerIcon /></Seg>
            <Seg aria-label="Editors"><ScissorsIcon /></Seg>
          </Group>
          <Group $wide>
            <Seg $w={43} aria-label="Rewind"><RewindIcon /></Seg>
            <Seg $w={43} aria-label="Forward"><ForwardIcon /></Seg>
            <Seg $w={44} aria-label="Play"><PlayIcon /></Seg>
            <Seg $w={43} aria-label="Record"><RecordIcon /></Seg>
            <Seg $w={36} $tone="gold" aria-label="Cycle"><CycleIcon /></Seg>
          </Group>

          <Lcd>
            <LcdCell>
              <Clock><Ghost>00:</Ghost>59:59:06.42</Clock>
              <Digits><span><Ghost>000</Ghost>0</span><span>3</span><span>3</span><span><Ghost>0</Ghost>22</span></Digits>
            </LcdCell>
            <LcdCell>
              <Digits><span><Ghost>000</Ghost>1</span><span>1</span><span>1</span><span><Ghost>00</Ghost>1</span></Digits>
              <Digits><span><Ghost>0</Ghost>101</span><span>1</span><span>1</span><span><Ghost>00</Ghost>1</span></Digits>
            </LcdCell>
            <LcdCell>
              <Tempo>120,0000</Tempo>
              <TempoMode>Keep Tempo</TempoMode>
            </LcdCell>
            <LcdCell $center>
              <div>4/4</div>
              <Division>/16</Division>
            </LcdCell>
            <LcdCell>
              <Load>CPU<LoadBar $lit /></Load>
              <Load>HD<LoadBar /></Load>
            </LcdCell>
            <LcdMenu aria-label="Display mode"><Chevron s={10} /></LcdMenu>
          </Lcd>

          <Group>
            <Seg aria-label="Replace"><ShieldIcon /></Seg>
            <Seg $w={35} aria-label="Tuner"><ForkIcon /></Seg>
            <Seg aria-label="Solo"><SoloIcon /></Seg>
          </Group>
          <Group><Seg>1234</Seg></Group>
          <More aria-label="More">
            <Icon w={14} h={12} sw={1.6}><path d="M2 2l4 4-4 4M8 2l4 4-4 4" /></Icon>
          </More>
          <Group $push>
            <Seg $w={35} aria-label="List editors"><ListIcon /></Seg>
            <Seg aria-label="Note pads"><NoteIcon /></Seg>
            <Seg $w={35} aria-label="Loop browser"><LoopIcon /></Seg>
            <Seg aria-label="Browsers"><MediaIcon /></Seg>
          </Group>
        </ControlBar>

        <Panels>
          <Panel>
            <Disclosure><Tri /><span>Region: <strong>MIDI Defaults</strong></span></Disclosure>
            <Disclosure><Tri /><span>Track: &nbsp;<strong>all vox</strong></span></Disclosure>
            <Strips>
              <ChannelStrip name="all vox" level="-2,2" fader={70} inserts={['FF Pro-Q 3', 'OneKnob Br', 'Compressor']} />
              <ChannelStrip name="Stereo Out" level="0,0" fader={82} inserts={['Ozone 9', 'Ozone 9 Ma']} output />
            </Strips>
          </Panel>

          <Panel $fill>
            <TrackBar>
              <Box>
                <BoxButton $w={32} $off aria-label="Back">
                  <Icon w={14} h={16}><path d="M3.500 5.500L7 2l3.500 3.500M7 2v8c0 2.500 1 4 4 4" /></Icon>
                </BoxButton>
              </Box>
              <Box>
                <MenuButton $w={59}>Edit<Chevron /></MenuButton>
                <MenuButton $w={94}>Functions<Chevron /></MenuButton>
                <MenuButton $w={66}>View<Chevron /></MenuButton>
              </Box>
              <Box>
                <BoxButton $w={32} aria-label="Grid">
                  <Icon w={14} h={14} sw={0}>
                    {[0, 5, 10].map((x) => [0, 5, 10].map((y) => <rect key={`${x}-${y}`} x={x} y={y} width="3.500" height="3.500" fill="#fff" />))}
                  </Icon>
                </BoxButton>
                <BoxButton $w={32} $on aria-label="Tracks">
                  <Icon w={18} h={14} sw={0}>
                    <path d="M0 .5h10v3H0zM12 .5h6v3h-6zM0 5.500h4v3H0zM6 5.500h12v3H6zM0 10.500h11v3H0zM13 10.500h5v3h-5z" fill="#fff" />
                  </Icon>
                </BoxButton>
              </Box>
              <Box>
                <BoxButton $w={32} aria-label="Automation">
                  <Icon w={22} h={14}>
                    <path d="M.8 11.500h3M7 10.500l7-7M17 2.500h1M20 2.500h1" />
                    <circle cx="7" cy="10.800" r="1.600" fill="currentColor" /><circle cx="14" cy="3" r="1.600" fill="currentColor" />
                  </Icon>
                </BoxButton>
                <BoxButton $w={32} aria-label="Flex">
                  <Icon w={22} h={14} sw={1.1}>
                    <path d="M1 1v12L21 1v12L1 1zM4 5v4M6.500 6v2M9.500 4.500v1.500M12.500 4.500v1.500M15.500 6v2M18 5v4M9.500 9v1.500M12.500 9v1.500" />
                  </Icon>
                </BoxButton>
              </Box>
              <Box>
                <BoxButton $w={32} $on aria-label="Catch playhead">
                  <Icon w={20} h={14} sw={1.4}>
                    <path d="M1 4.500l3.500 3-3.500 3M19 4.500l-3.500 3 3.500 3" />
                    <path d="M10 5v8M7 1h6v2l-3 3-3-3z" fill="currentColor" />
                  </Icon>
                </BoxButton>
              </Box>
              <Box $push>
                <BoxButton $w={43} aria-label="Pointer tool">
                  <Icon w={28} h={14} sw={1.3}>
                    <path d="M3.500 1v11l2.700-2.400 1.600 3.700 1.600-.7-1.600-3.600H11z" fill="#fff" stroke="none" />
                    <path d="M20 6l3 3 3-3" stroke="#9a9a9a" />
                  </Icon>
                </BoxButton>
                <BoxButton $w={42} aria-label="Marquee tool">
                  <Icon w={30} h={14} sw={1.3}>
                    <path d="M8 .7v4.500M8 8.800v4.500M1.500 7H6M10 7h4.500" />
                    <path d="M23 6l3 3 3-3" stroke="#9a9a9a" />
                  </Icon>
                </BoxButton>
              </Box>
              <Field>Snap:
                <SelectBox $w={156}><Select defaultValue="Smart"><option>Smart</option><option>Bar</option></Select><UpDown /></SelectBox>
              </Field>
              <Field>Drag:
                <SelectBox $w={98}><Select defaultValue="No Overlap"><option>No Overlap</option><option>Overlap</option></Select><UpDown /></SelectBox>
              </Field>
              <Box><BoxButton $w={32} aria-label="Waveform zoom"><WaveGlyph /></BoxButton></Box>
              <Box>
                <BoxButton $w={32} aria-label="Fit vertically">
                  <Icon w={14} h={14} sw={1.4}><path d="M1 1h12M1 13h12M7 3v8M4.500 5L7 2.500 9.500 5M4.500 9L7 11.500 9.500 9" /></Icon>
                </BoxButton>
                <BoxButton $w={32} aria-label="Fit horizontally">
                  <Icon w={14} h={14} sw={1.4}><path d="M1 1v12M13 1v12M3 7h8M5 4.500L2.500 7 5 9.500M9 4.500L11.500 7 9 9.500" /></Icon>
                </BoxButton>
              </Box>
              <Box>
                <ZoomPart $w={74}>
                  <Icon w={8} h={14}><path d="M4 1v12M1 4l3-3 3 3M1 10l3 3 3-3" /></Icon>
                  <ZoomRange type="range" defaultValue={56} aria-label="Vertical zoom" />
                </ZoomPart>
                <ZoomPart $w={74}>
                  <Icon w={13} h={8}><path d="M1 4h11M4 1L1 4l3 3M9 1l3 3-3 3" /></Icon>
                  <ZoomRange type="range" defaultValue={2} aria-label="Horizontal zoom" />
                </ZoomPart>
              </Box>
            </TrackBar>

            <Arrange>
              <div>
                <HeaderTop>
                  <Box><BoxButton $w={32} aria-label="Add track"><Icon w={12} h={12}><path d="M6 1v10M1 6h10" /></Icon></BoxButton></Box>
                  <Box>
                    <BoxButton $w={32} aria-label="Duplicate track">
                      <Icon w={18} h={16}>
                        <rect x="1" y="1" width="11" height="11" fill="#fff" stroke="#fff" />
                        <path d="M6.500 3.500v6M3.500 6.500h6" stroke="#3d3d3d" />
                        <path d="M14.500 5H16.500v10H6v-1.500" />
                      </Icon>
                    </BoxButton>
                  </Box>
                  <Box><BoxButton $w={32}>S</BoxButton></Box>
                  <Box $push><BoxButton $w={32} aria-label="Track header options"><DropWindowIcon s={15} /></BoxButton></Box>
                </HeaderTop>
                <Headers>
                  {TRACKS.map((t) => <TrackHeader key={t.n} t={t} />)}
                </Headers>
              </div>

              <Timeline>
                <Ruler>
                  <Cycle />
                  <Overlay width="860" height="35" aria-hidden="true">
                    {BARS.slice(1).map((i) => <rect key={i} x={barX(i)} y="20" width="1.200" height="14" fill="#5c5c5c" />)}
                    {[16, 32, 48, 64, 80, 96].map((i) => <rect key={i} x={Math.round(barX(i))} y="3" width="1" height="14" fill="#111" />)}
                    <path d="M1 1.500l8 6-8 6z" fill="#6a6a6a" stroke="#222" />
                    <path d="M853 2v12l-8-6z" fill="#7c7c7c" />
                  </Overlay>
                  {[1, 17, 33, 49, 65, 81, 97].map((b) => (
                    <BarLabel key={b} $x={b === 1 ? 13 : Math.round(barX(b - 1)) + 4}>{b}</BarLabel>
                  ))}
                </Ruler>
                <LaneStack>
                  <Lane $clipped $bg="#2f2f2f" />
                  <Lane $bg="#2f363e" />
                  {LANES.map((_, i) => <Lane key={i} $bg={LANE_BG} />)}
                  <Overlay width="860" height="616" aria-hidden="true">
                    {BARS.map((i) => <rect key={i} x={barX(i)} y="0" width="1.200" height="616" fill="#9aa3ad" opacity=".34" />)}
                  </Overlay>
                </LaneStack>
                <Clips />
                <EndShade />
                <StartShade />
                <Overlay width="16" height="662" aria-hidden="true">
                  <path d="M7.500 29v631" stroke="#e4e4e4" strokeWidth="1" />
                  <path d="M1 18h12v5l-6 7-6-7z" fill="#dedede" stroke="#8a8a8a" strokeWidth=".6" />
                </Overlay>
              </Timeline>

              <div>
                <ScrollTop />
                <ScrollTrack><ScrollThumb /></ScrollTrack>
              </div>
            </Arrange>
            <FootBar><span /><span /><span /></FootBar>
          </Panel>
        </Panels>
      </Window>
    </Page>
  );
}
